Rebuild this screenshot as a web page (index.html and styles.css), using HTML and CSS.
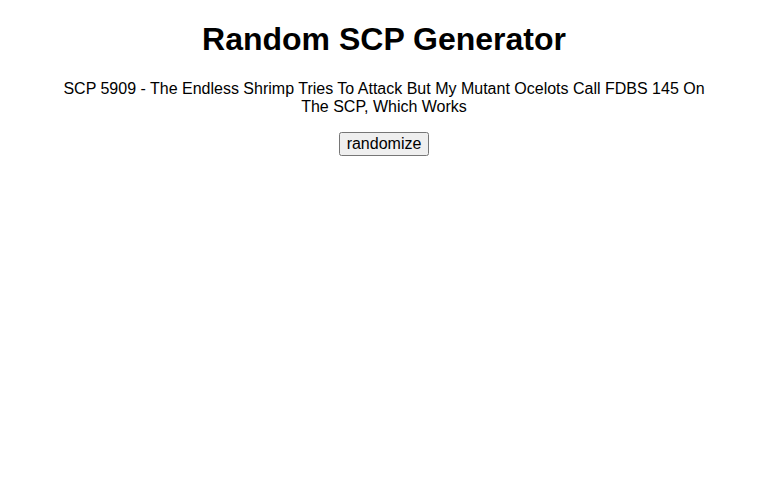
FILE: index.html
```html
<!DOCTYPE html>
<html lang="en">
<head>
  <meta charset="UTF-8" />
  <meta name="viewport" content="width=device-width, initial-scale=1.0"/>
  <title>Random SCP Generator</title>
  <link rel="stylesheet" href="styles.css">
</head>
<body>

  <h1>Random SCP Generator</h1>

  <p class="scp" id="scpText">SCP 5909 - The Endless Shrimp Tries To Attack But My Mutant Ocelots Call FDBS 145 On The SCP, Which Works</p>
  <button onclick="randomize()">randomize</button>

  <script>
    const subjects = ["The Endless Shrimp", "A Sentient Toaster", "The Crying Lamp", "Old Man Larry"];
    const actions = ["Tries To Attack", "Escapes Containment", "Starts Singing", "Eats The Cafeteria"];
    const endings = ["But My Mutant Ocelots Call FDBS 145 On The SCP, Which Works", "And Nobody Notices", "So The O5 Council Gives Up"];

    function pick(list) {
      return list[Math.floor(Math.random() * list.length)];
    }

    function randomize() {
      const num = Math.floor(1000 + Math.random() * 8999);
      document.getElementById("scpText").textContent =
        "SCP " + num + " - " + pick(subjects) + " " + pick(actions) + " " + pick(endings);
    }
  </script>

</body>
</html>
```

FILE: styles.css
```css
body {
  margin: 0;
  font-family: 'Liberation Sans', Arial, sans-serif;
  text-align: center;
  color: #000;
  background: #fff;
}

h1 {
  font-size: 32px;
}

.scp {
  font-size: 16px;
  max-width: 660px;
  margin: 16px auto;
}

button {
  font-family: 'Liberation Sans', Arial, sans-serif;
  font-size: 16px;
}
```
